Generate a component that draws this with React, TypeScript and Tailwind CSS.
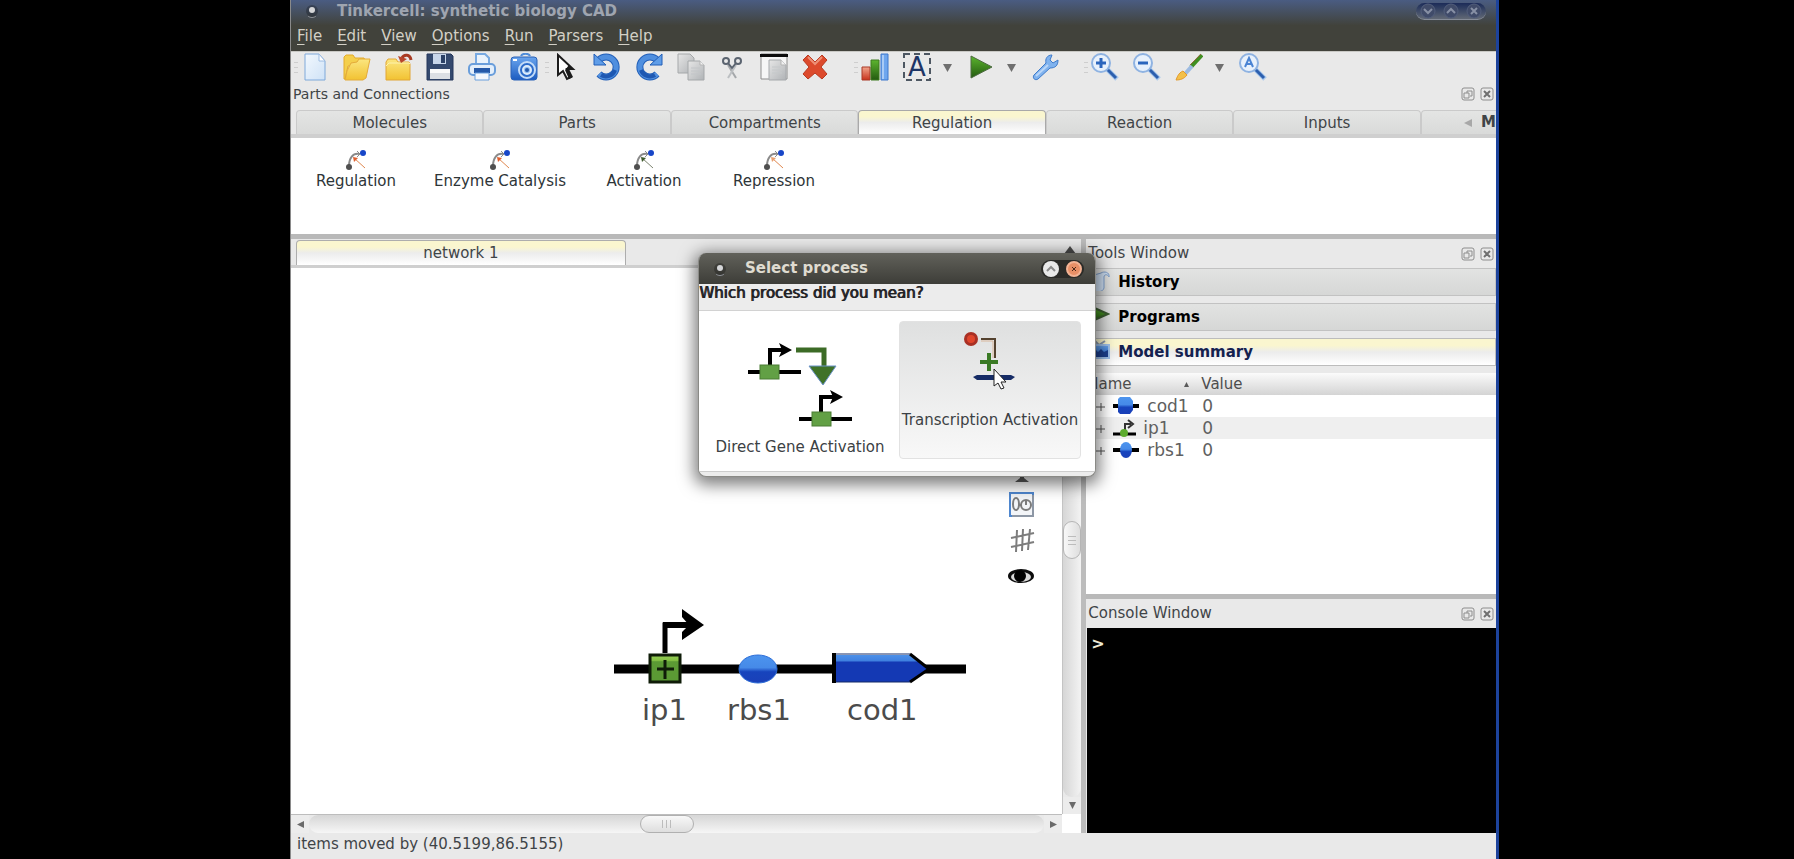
import type { ReactNode } from "react"
import clsx from "clsx"

interface IconProps {
  children: ReactNode
}

// 28px toolbar drawing
function Icon({ children }: IconProps) {
  return (
    <svg viewBox="0 0 28 28" className="size-7 shrink-0" fill="none" aria-hidden="true">
      {children}
    </svg>
  )
}

function Gradients() {
  return (
    <svg width="0" height="0" className="absolute" aria-hidden="true">
      <defs>
        <linearGradient id="blue" x1="0" y1="0" x2="0" y2="1">
          <stop offset="0" stopColor="#6aa5ee" />
          <stop offset="1" stopColor="#1c5cc0" />
        </linearGradient>
        <linearGradient id="paper" x1="0" y1="0" x2="1" y2="1">
          <stop offset="0" stopColor="#f2f8fe" />
          <stop offset="1" stopColor="#cfe2f6" />
        </linearGradient>
        <linearGradient id="yellow" x1="0" y1="0" x2="0" y2="1">
          <stop offset="0" stopColor="#fbe680" />
          <stop offset="1" stopColor="#f2c232" />
        </linearGradient>
        <linearGradient id="grey" x1="0" y1="0" x2="1" y2="1">
          <stop offset="0" stopColor="#e6e6e6" />
          <stop offset="1" stopColor="#b0b3b6" />
        </linearGradient>
        <linearGradient id="green" x1="0" y1="0" x2="0" y2="1">
          <stop offset="0" stopColor="#5cb52f" />
          <stop offset="1" stopColor="#245a10" />
        </linearGradient>
        <linearGradient id="red" x1="0" y1="0" x2="0" y2="1">
          <stop offset="0" stopColor="#f0a58c" />
          <stop offset="1" stopColor="#c8321c" />
        </linearGradient>
        <linearGradient id="cds" x1="0" y1="0" x2="0" y2="1">
          <stop offset="0" stopColor="#4c90e8" />
          <stop offset="0.22" stopColor="#3f80e0" />
          <stop offset="0.26" stopColor="#1439b4" />
          <stop offset="1" stopColor="#1439b4" />
        </linearGradient>
        <linearGradient id="rbs" x1="0" y1="0" x2="0" y2="1">
          <stop offset="0" stopColor="#4c94ee" />
          <stop offset="0.45" stopColor="#468ae8" />
          <stop offset="0.6" stopColor="#1744bd" />
          <stop offset="1" stopColor="#1a40b8" />
        </linearGradient>
        <linearGradient id="box" x1="0" y1="0" x2="0" y2="1">
          <stop offset="0" stopColor="#97cf57" />
          <stop offset="0.2" stopColor="#84c044" />
          <stop offset="0.25" stopColor="#5b9a34" />
          <stop offset="1" stopColor="#5b9a34" />
        </linearGradient>
      </defs>
    </svg>
  )
}

const NewIcon = () => (
  <Icon>
    <path d="M4 1h14l6 7v19H4z" fill="url(#paper)" stroke="#7fa9da" />
    <path d="M18 1v7h6z" fill="#fff" stroke="#9cbce2" />
  </Icon>
)

const OpenIcon = () => (
  <Icon>
    <path d="M1 4l2-2h7l2 3h9l1 2v6H5L2 26H1z" fill="#f4cf4c" stroke="#e2ab2a" />
    <path d="M8 10l6-1 2-3h11l-4 19-3 2H2l2-9z" fill="url(#yellow)" stroke="#e4ab3a" />
  </Icon>
)

const RevertIcon = () => (
  <Icon>
    <path d="M1 9l2-3h8l2 3h11l1 2v16H1z" fill="url(#yellow)" stroke="#e2a634" />
    <path d="M1 13l3-3h20l1 1" stroke="#fdf2ae" />
    <path d="M26 7c-1-6-7-6-9-2" stroke="#a83a22" strokeWidth="3" />
    <path d="M13 3l3 7 6-4z" fill="#b8452b" />
  </Icon>
)

const SaveIcon = () => (
  <Icon>
    <path d="M1 1h24l2 2v24H1z" fill="#34496e" stroke="#24365a" />
    <path d="M7 1h13v10H7z" fill="#c8d6ea" />
    <path d="M15 2h4v8h-4z" fill="#2c4166" />
    <path d="M4 16h20v10H4z" fill="#dcdfe4" />
    <path d="M4 16h20v4H4z" fill="#fafafa" />
  </Icon>
)

const PrintIcon = () => (
  <Icon>
    <path d="M8 12V1h9l4 4v7" fill="#eaf3fc" stroke="#78aae2" strokeWidth="2" />
    <rect x="1" y="11" width="26" height="11" rx="4" fill="#e3eefa" stroke="#6a9edb" strokeWidth="2" />
    <path d="M6 15h16v5H6z" fill="#2559a8" />
    <path d="M7 20h14v7H7z" fill="#f4f8fd" stroke="#6aa0dd" />
  </Icon>
)

const CameraIcon = () => (
  <Icon>
    <path d="M11 3c1-3 8-3 9 0" stroke="#4f8cd8" strokeWidth="2" />
    <rect x="1" y="4" width="26" height="23" rx="3" fill="url(#blue)" stroke="#2a62b8" />
    <path d="M3 7h4" stroke="#fff" strokeWidth="2" />
    <circle cx="17" cy="17" r="8" fill="#2c6ccb" stroke="#c4dcf8" strokeWidth="2" />
    <circle cx="17" cy="17" r="4" fill="#8fbdf2" stroke="#dcebfb" strokeWidth="2" />
    <circle cx="17" cy="17" r="2" fill="#2459ab" />
  </Icon>
)

const PointerIcon = () => (
  <Icon>
    <path d="M6 2v20l5-4 4 8 4-2-4-8h6z" fill="#fff" stroke="#1c1c1c" strokeWidth="2" />
    <path d="M13 17l4 9 4-2-4-8h4l-4-4z" fill="#1c1c1c" />
  </Icon>
)

const UndoIcon = () => (
  <Icon>
    <path d="M6 21a10 10 0 1 0 0-14" stroke="#225fb8" strokeWidth="7" />
    <path d="M6 21a10 10 0 1 0 0-14" stroke="#4f8fdf" strokeWidth="5" />
    <path d="M1 1v11h12z" fill="#5f9de8" stroke="#225fb8" />
    <path d="M8 22c5 3 12 1 14-5" stroke="#1e58b2" strokeWidth="4" />
  </Icon>
)

const RedoIcon = () => (
  <Icon>
    <path d="M22 21a10 10 0 1 1 0-14" stroke="#225fb8" strokeWidth="7" />
    <path d="M22 21a10 10 0 1 1 0-14" stroke="#4f8fdf" strokeWidth="5" />
    <path d="M27 1v11H15z" fill="#5f9de8" stroke="#225fb8" />
    <path d="M20 22c-5 3-12 1-14-5" stroke="#1e58b2" strokeWidth="4" />
  </Icon>
)

const CopyIcon = () => (
  <Icon>
    <path d="M1 1h12l4 4v15H1z" fill="url(#grey)" stroke="#a5a8aa" />
    <path d="M11 8h12l4 4v15H11z" fill="url(#grey)" stroke="#a5a8aa" />
    <path d="M23 8v4h4" fill="#f2f2f2" stroke="#b5b5b5" />
    <path d="M14 15h9M14 18h10M14 21h10" stroke="#c2c5c8" />
  </Icon>
)

const CutIcon = () => (
  <Icon>
    <path d="M10 12l8 13" stroke="#a4a7aa" strokeWidth="2" />
    <path d="M18 12l-8 13" stroke="#bcbfc2" strokeWidth="2" />
    <circle cx="8" cy="8" r="3" stroke="#5b6470" strokeWidth="2" />
    <circle cx="20" cy="8" r="3" stroke="#5b6470" strokeWidth="2" />
    <path d="M10 10l4 5 4-5" stroke="#5b6470" strokeWidth="2" />
  </Icon>
)

const PasteIcon = () => (
  <Icon>
    <path d="M1 1h26v25H1z" fill="#f6f6f6" stroke="#8d8d8d" />
    <path d="M0 1h28v3H0z" fill="#0d0d0d" />
    <path d="M9 7h12l5 5v15H9z" fill="url(#grey)" stroke="#a6a9ac" />
    <path d="M21 7v5h5" fill="#f0f0f0" stroke="#b5b5b5" />
    <path d="M12 14h9M12 17h10M12 20h10" stroke="#c5c8ca" />
  </Icon>
)

const DeleteIcon = () => (
  <Icon>
    <path
      d="M7 2l7 7 7-7 5 5-6 7 6 7-5 5-7-6-7 6-5-5 6-7-6-7z"
      fill="#dc4a2c"
      stroke="#b93a20"
      strokeLinejoin="round"
    />
    <path d="M7 4l7 7 7-7" stroke="#ee9076" strokeWidth="2" />
  </Icon>
)

const ChartIcon = () => (
  <Icon>
    <path d="M1 14h8v13H1z" fill="url(#red)" stroke="#a93826" />
    <path d="M10 7h8v20h-8z" fill="url(#green)" stroke="#3c7a1e" />
    <path d="M20 1h7v26h-7z" fill="#6ea6ee" stroke="#3f78cc" />
    <path d="M22 2v24" stroke="#a9cbf6" strokeWidth="2" />
  </Icon>
)

const TextIcon = () => (
  <Icon>
    <rect x="1" y="1" width="26" height="26" stroke="#4d5762" strokeWidth="2" strokeDasharray="6 4" />
    <text x="14" y="23" textAnchor="middle" fontSize="26" fill="#1d3566" fontFamily="DejaVu Sans, sans-serif">
      A
    </text>
  </Icon>
)

const RunIcon = () => (
  <Icon>
    <path d="M4 3l21 11L4 25z" fill="url(#green)" stroke="#4c6a40" strokeLinejoin="round" />
  </Icon>
)

const WrenchIcon = () => (
  <Icon>
    <path
      d="M3 22l12-12c-1-4 1-8 6-8l-2 5 3 3 5-3c0 6-3 8-8 8L7 26c-3 2-6-1-4-4z"
      fill="#7fb2ee"
      stroke="#3e7bcb"
    />
    <path d="M5 23l12-11" stroke="#b9d6f8" strokeWidth="2" />
  </Icon>
)

function ZoomIcon({ children }: IconProps) {
  return (
    <Icon>
      <path d="M16 16l10 10" stroke="#a9c8ec" strokeWidth="5" />
      <path d="M16 16l9 9" stroke="#2c5fae" strokeWidth="3" />
      <circle cx="10" cy="10" r="9" fill="#e8f1fc" stroke="#8fb3e2" strokeWidth="2" />
      {children}
    </Icon>
  )
}

const BrushIcon = () => (
  <Icon>
    <path d="M27 2L16 14" stroke="#3f8f22" strokeWidth="4" />
    <path d="M26 1L15 12" stroke="#8b6a3a" />
    <path d="M17 13l-7 8" stroke="#9dbbe2" strokeWidth="4" />
    <path d="M8 18l4 4c-3 4-7 5-11 5 1-2 2-7 7-9z" fill="#f3c04a" stroke="#e39a2c" />
  </Icon>
)

function ToolButton({ label, grow, children }: { label: string; grow?: boolean; children: ReactNode }) {
  return (
    <button type="button" aria-label={label} className={clsx("flex justify-center", grow ? "flex-1" : "w-[42px]")}>
      {children}
    </button>
  )
}

function DropArrow({ label }: { label: string }) {
  return (
    <button type="button" aria-label={label} className="mr-1 flex w-[18px] justify-center">
      <svg viewBox="0 0 10 10" className="size-[9px]">
        <path d="M0 1h10L5 10z" fill="#6f6f6f" />
      </svg>
    </button>
  )
}

// dotted handle at the start of a toolbar group
function Grip() {
  return (
    <div className="-mr-1 flex w-1 flex-col gap-1">
      <span className="h-px bg-[#cecece]" />
      <span className="h-px bg-[#cecece]" />
      <span className="h-px bg-[#cecece]" />
    </div>
  )
}

function Toolbar() {
  return (
    <div className="flex h-[31px] items-center border-t border-[#c9c9c5] pl-[3px]">
      <div className="flex w-[251px] items-center">
        <Grip />
        <ToolButton label="New" grow><NewIcon /></ToolButton>
        <ToolButton label="Open" grow><OpenIcon /></ToolButton>
        <ToolButton label="Revert" grow><RevertIcon /></ToolButton>
        <ToolButton label="Save" grow><SaveIcon /></ToolButton>
        <ToolButton label="Print" grow><PrintIcon /></ToolButton>
        <ToolButton label="Snapshot" grow><CameraIcon /></ToolButton>
      </div>
      <div className="flex w-[291px] items-center">
        <Grip />
        <ToolButton label="Select" grow><PointerIcon /></ToolButton>
        <ToolButton label="Undo" grow><UndoIcon /></ToolButton>
        <ToolButton label="Redo" grow><RedoIcon /></ToolButton>
        <ToolButton label="Copy" grow><CopyIcon /></ToolButton>
        <ToolButton label="Cut" grow><CutIcon /></ToolButton>
        <ToolButton label="Paste" grow><PasteIcon /></ToolButton>
        <ToolButton label="Delete" grow><DeleteIcon /></ToolButton>
      </div>
      <div className="ml-[18px] flex items-center">
        <Grip />
        <ToolButton label="Plot"><ChartIcon /></ToolButton>
        <ToolButton label="Text"><TextIcon /></ToolButton>
        <DropArrow label="Text options" />
        <ToolButton label="Run"><RunIcon /></ToolButton>
        <DropArrow label="Run options" />
        <ToolButton label="Settings"><WrenchIcon /></ToolButton>
      </div>
      <div className="ml-[18px] flex items-center">
        <Grip />
        <ToolButton label="Zoom in">
          <ZoomIcon><path d="M5 10h10M10 5v10" stroke="#2c66bd" strokeWidth="3" /></ZoomIcon>
        </ToolButton>
        <ToolButton label="Zoom out">
          <ZoomIcon><path d="M5 10h10" stroke="#2c66bd" strokeWidth="3" /></ZoomIcon>
        </ToolButton>
        <ToolButton label="Brush"><BrushIcon /></ToolButton>
        <DropArrow label="Brush options" />
        <ToolButton label="Find">
          <ZoomIcon><path d="M6 14l4-9 4 9M7 11h6" stroke="#4a84d4" strokeWidth="2" /></ZoomIcon>
        </ToolButton>
      </div>
    </div>
  )
}

function DockTitle({ title, className }: { title: string; className: string }) {
  return (
    <div className={clsx("flex items-center justify-between pr-[2px] pl-[2px] text-[#3f4447]", className)}>
      <h2>{title}</h2>
      <div className="flex gap-[5px]">
        <button type="button" aria-label={`Float ${title}`}>
          <svg viewBox="0 0 14 14" className="size-[14px]" fill="none" stroke="#8d8d8d">
            <rect x="1" y="1" width="12" height="12" rx="2" />
            <path d="M6 6V4h5v5H9M3 6h5v5H3z" />
          </svg>
        </button>
        <button type="button" aria-label={`Close ${title}`}>
          <svg viewBox="0 0 14 14" className="size-[14px]" fill="none" stroke="#8d8d8d">
            <rect x="1" y="1" width="12" height="12" rx="2" />
            <path d="M4 4l6 6M10 4l-6 6" stroke="#6f6f6f" strokeWidth="2" />
          </svg>
        </button>
      </div>
    </div>
  )
}

const menus = ["File", "Edit", "View", "Options", "Run", "Parsers", "Help"]

const tabs = ["Molecules", "Parts", "Compartments", "Regulation", "Reaction", "Inputs"]

const parts = [
  { name: "Regulation", color: "#e08850", dot: "#e06030", width: "w-[122px]" },
  { name: "Enzyme Catalysis", color: "#e08850", dot: "#e06030", width: "w-[166px]" },
  { name: "Activation", color: "#7d8470", dot: "#3f5a2c", width: "w-[122px]" },
  { name: "Repression", color: "#e08850", dot: "#e8a070", width: "w-[138px]" },
]

function PartsDock() {
  return (
    <section>
      <DockTitle title="Parts and Connections" className="mb-1 h-6 text-[14px]" />
      <div role="tablist" className="flex h-6 pl-[5px] text-[15px] text-[#3f4447]">
        {tabs.map((tab) => (
          <button
            key={tab}
            type="button"
            role="tab"
            aria-selected={tab === "Regulation"}
            className={clsx(
              "flex-[5] rounded-t border border-b-0 leading-[22px]",
              tab === "Regulation"
                ? "border-[#a9a9a9] bg-linear-to-b from-[#faf6cf] from-25% via-[#ececec] via-50% to-white"
                : "border-[#cacaca] bg-linear-to-b from-[#e4e5e4] to-[#d9dad9]"
            )}
          >
            {tab}
          </button>
        ))}
        <button
          type="button"
          role="tab"
          aria-selected={false}
          className="flex flex-[2] items-center justify-end gap-[9px] overflow-hidden rounded-tl border border-r-0 border-b-0 border-[#cacaca] bg-linear-to-b from-[#e4e5e4] to-[#d9dad9] font-bold"
        >
          <svg viewBox="0 0 8 8" className="size-2">
            <path d="M8 0v8L0 4z" fill="#a8a8a8" />
          </svg>
          M
        </button>
      </div>
      <div className="h-1 bg-[#cfcfcf]" />
      <div className="flex h-24 bg-white pt-3 pl-1">
        {parts.map((part) => (
          <button
            key={part.name}
            type="button"
            className={clsx("flex flex-col items-center text-[15px] leading-5 text-[#2e3538]", part.width)}
          >
            <svg viewBox="0 0 20 20" className="size-5" fill="none">
              <path d="M3 16C3 8 7 3 13 4" stroke="#8a8a8a" strokeWidth="2" />
              <path d="M11 1l3 3-3 3" stroke="#8a8a8a" />
              <path d="M8 8l11 10" stroke={part.color} />
              <path d="M7 7l5 1-4 4z" fill={part.dot} />
              <circle cx="3" cy="17" r="3" fill="#4f4f4f" />
              <circle cx="17" cy="3" r="3" fill="#1746c8" />
            </svg>
            <span className="mt-px whitespace-nowrap">{part.name}</span>
          </button>
        ))}
      </div>
    </section>
  )
}

function Network() {
  return (
    <svg viewBox="0 0 352 120" className="absolute top-[340px] left-[323px] h-[120px] w-[352px]">
      <path d="M0 61h352" stroke="#000" strokeWidth="9" />
      <path d="M51 45V17h30" stroke="#000" strokeWidth="5" fill="none" />
      <path d="M68 1l22 16-22 15v-8l7-7-7-8z" fill="#000" />
      <path d="M49 14h28v6H49z" fill="#000" />
      <rect x="36" y="47" width="30" height="27" fill="url(#box)" stroke="#0f1c08" strokeWidth="3" />
      <path d="M43 61h17M51 52v19" stroke="#0f1c08" strokeWidth="3" />
      <ellipse cx="144" cy="61" rx="19" ry="14" fill="url(#rbs)" stroke="#2f6fd8" />
      <path d="M219 47h77l18 14-18 13h-77z" fill="url(#cds)" />
      <path d="M219 46h77M219 74h77" stroke="#142a66" />
      <path d="M296 46l19 15-19 13" stroke="#000" strokeWidth="3" fill="none" />
      <path d="M220 45v30" stroke="#000" strokeWidth="4" />
      <g fontSize="29" fill="#4b4b4b" fontFamily="DejaVu Sans, sans-serif">
        <text x="28" y="112">ip1</text>
        <text x="113" y="112">rbs1</text>
        <text x="233" y="112">cod1</text>
      </g>
    </svg>
  )
}

// small tools floating over the right side of the canvas
function CanvasTools() {
  return (
    <div className="absolute top-[186px] right-[26px] flex flex-col gap-2">
      <button type="button" aria-label="Display">
        <Icon>
          <path d="M2 2h24v18H2z" fill="#8a8a8a" />
          <path d="M12 18h4v6l5 4H7l5-4z" fill="#5b5b5b" />
        </Icon>
      </button>
      <button type="button" aria-label="Overview">
        <Icon>
          <rect x="2" y="3" width="23" height="23" fill="#f3f5f8" stroke="#4f87cf" strokeWidth="2" />
          <path d="M25 5v21H4" stroke="#8d97a5" strokeWidth="2" />
          <ellipse cx="8" cy="14" rx="3" ry="6" stroke="#7c7c7c" strokeWidth="2" />
          <circle cx="18" cy="15" r="5" stroke="#7c7c7c" strokeWidth="2" />
          <path d="M11 15h2M18 11v4" stroke="#7c7c7c" strokeWidth="2" />
        </Icon>
      </button>
      <button type="button" aria-label="Grid">
        <Icon>
          <path d="M3 12l23-5M3 21l23-5M9 4L8 26M15 3l-1 22M22 3l-2 21" stroke="#7d7d7d" strokeWidth="2" />
        </Icon>
      </button>
      <button type="button" aria-label="Visibility">
        <Icon>
          <ellipse cx="13" cy="14" rx="13" ry="7" fill="#0c0c0c" />
          <ellipse cx="13" cy="15" rx="10" ry="5" fill="#d9d9d9" />
          <circle cx="12" cy="14" r="6" fill="#000" />
        </Icon>
      </button>
    </div>
  )
}

function Arrow({ d, label, className }: { d: string; label: string; className: string }) {
  return (
    <button type="button" aria-label={label} className={clsx("flex items-center justify-center bg-[#ececec]", className)}>
      <svg viewBox="0 0 8 8" className="size-[7px]">
        <path d={d} fill="#6a6a6a" />
      </svg>
    </button>
  )
}

function NetworkView() {
  return (
    <section className="flex min-w-0 flex-1 flex-col">
      <div className="flex h-[29px] justify-between border-b-3 border-[#cfcfcf] pt-px pl-[5px]">
        <button
          type="button"
          role="tab"
          aria-selected
          className="w-[42%] rounded-t border border-b-0 border-[#adadad] bg-linear-to-b from-[#faf6cf] from-25% via-[#ececec] via-50% to-white text-[15px] leading-[22px] text-[#3f4447]"
        >
          network 1
        </button>
        <svg viewBox="0 0 12 12" className="mt-1 mr-[5px] size-3">
          <path d="M6 2l6 8H0z" fill="#4b4b4b" />
        </svg>
      </div>
      <div className="flex flex-1">
        <div className="relative flex-1 overflow-hidden bg-white">
          <Network />
          <CanvasTools />
        </div>
        <div className="flex w-[19px] flex-col border-l border-[#c4c4c4]">
          <Arrow d="M4 1l4 6H0z" label="Scroll up" className="h-[18px]" />
          <div className="relative flex-1 rounded-full bg-linear-to-r from-[#d6d6d6] to-[#f3f3f3]">
            <div className="absolute top-[46%] flex h-[38px] w-full flex-col items-center justify-center gap-[3px] rounded-full border border-[#b5b5b5] bg-linear-to-r from-[#f8f8f8] to-[#dedede]">
              <span className="h-px w-2 bg-[#bcbcbc]" />
              <span className="h-px w-2 bg-[#bcbcbc]" />
              <span className="h-px w-2 bg-[#bcbcbc]" />
            </div>
          </div>
          <Arrow d="M0 0h8L4 8z" label="Scroll down" className="h-[17px]" />
        </div>
      </div>
      <div className="flex h-[19px]">
        <div className="flex flex-1 border-t border-[#bdbdbd]">
          <Arrow d="M8 0v8L0 4z" label="Scroll left" className="w-[18px]" />
          <div className="relative flex-1 rounded-full bg-linear-to-b from-[#d6d6d6] to-[#f6f6f6]">
            <div className="absolute left-[45%] flex h-full w-[54px] items-center justify-center gap-[3px] rounded-full border border-[#b0b0b0] bg-linear-to-b from-[#f8f8f8] to-[#dedede]">
              <span className="h-2 w-px bg-[#bcbcbc]" />
              <span className="h-2 w-px bg-[#bcbcbc]" />
              <span className="h-2 w-px bg-[#bcbcbc]" />
            </div>
          </div>
          <Arrow d="M0 0l8 4-8 4z" label="Scroll right" className="w-[18px]" />
        </div>
        <div className="w-[19px] bg-white" />
      </div>
    </section>
  )
}

const sections = [
  {
    name: "History",
    icon: <path d="M2 6c3 3 4 9 2 14 4 3 10 2 11-2V7c0-3 4-3 5 0 1-5-5-6-8-4z" fill="#cfe0f4" stroke="#7f9fcb" />,
  },
  {
    name: "Programs",
    icon: <path d="M1 1l18 8L1 17z" fill="url(#green)" stroke="#3c5c30" strokeWidth="2" />,
  },
  {
    name: "Model summary",
    icon: (
      <>
        <path d="M6 1l4 4 6-4" stroke="#8a98ad" strokeWidth="2" />
        <path d="M1 5h19v13H1z" fill="url(#blue)" stroke="#9dbfe9" strokeWidth="2" />
        <path d="M2 17v-5l4-3 3 3 3-3 3 3 4-2v7z" fill="#1c3f8e" />
      </>
    ),
  },
]

const rows = [
  {
    name: "cod1",
    value: 0,
    icon: (
      <>
        <path d="M0 9h26" stroke="#000" strokeWidth="4" />
        <path d="M5 2l2-2h10l3 4v9l-3 4H7l-2-2z" fill="url(#rbs)" />
      </>
    ),
  },
  {
    name: "ip1",
    value: 0,
    icon: (
      <>
        <path d="M0 15h23" stroke="#000" strokeWidth="3" />
        <path d="M12 13V5h6" stroke="#333" strokeWidth="2" />
        <path d="M15 1l5 4-5 4" stroke="#333" strokeWidth="2" />
        <circle cx="11" cy="14" r="4" fill="#5cab2e" />
      </>
    ),
  },
  {
    name: "rbs1",
    value: 0,
    icon: (
      <>
        <path d="M0 9h26" stroke="#000" strokeWidth="4" />
        <ellipse cx="13" cy="9" rx="6" ry="8" fill="url(#rbs)" />
      </>
    ),
  },
]

function ToolsDock() {
  return (
    <section className="flex flex-1 flex-col">
      <DockTitle title="Tools Window" className="h-[29px] text-[15px]" />
      <div className="flex flex-col gap-[7px] pb-[7px]">
        {sections.map((s) => (
          <button
            key={s.name}
            type="button"
            className={clsx(
              "flex h-7 items-center gap-2 border pl-[2px] text-[15px] font-bold",
              s.name === "Model summary"
                ? "border-[#bcbcbc] bg-linear-to-b from-[#faf6cf] from-25% via-[#ececec] via-50% to-white text-[#14214f]"
                : "border-[#c2c2c2] bg-linear-to-b from-[#e2e3e2] to-[#d6d7d6] text-black"
            )}
          >
            <svg viewBox="0 0 21 21" className="-mt-1 size-[21px]" fill="none">
              {s.icon}
            </svg>
            {s.name}
          </button>
        ))}
      </div>
      <div className="flex-1 bg-white">
        <table className="w-full table-fixed border-collapse text-left text-[#606060]">
          <thead>
            <tr className="h-[22px] bg-linear-to-b from-[#fbfbfb] to-[#d4d4d4] text-[15px] leading-[22px] text-[#4d4d4d]">
              <th scope="col" className="w-[115px] p-0 pl-px font-normal">
                <span className="flex items-center justify-between pr-3">
                  Name
                  <svg viewBox="0 0 6 6" className="size-[5px]">
                    <path d="M3 0l3 6H0z" fill="#5a5a5a" />
                  </svg>
                </span>
              </th>
              <th scope="col" className="p-0 font-normal">Value</th>
            </tr>
          </thead>
          <tbody className="text-[17px] leading-[22px]">
            {rows.map((row) => (
              <tr key={row.name} className="h-[22px] even:bg-[#efefef]">
                <td className="p-0 pl-[10px]">
                  <span className="flex items-center">
                    <svg viewBox="0 0 9 9" className="size-[9px]">
                      <path d="M0 5h9M5 1v8" stroke="#555" />
                    </svg>
                    <svg
                      viewBox="0 0 26 18"
                      className={clsx("ml-2 h-[18px] w-[26px]", row.name === "ip1" ? "mr-1" : "mr-2")}
                      fill="none"
                    >
                      {row.icon}
                    </svg>
                    {row.name}
                  </span>
                </td>
                <td className="p-0 pl-px">{row.value}</td>
              </tr>
            ))}
          </tbody>
        </table>
      </div>
    </section>
  )
}

function ConsoleDock() {
  return (
    <section className="flex flex-col">
      <DockTitle title="Console Window" className="h-[29px] text-[15px]" />
      <textarea
        aria-label="Console"
        defaultValue=">"
        className="ml-px h-[205px] resize-none bg-black px-1 py-[6px] text-[16px] leading-5 font-bold text-[#eeead6] outline-none"
      />
    </section>
  )
}

function AppGlyph() {
  return (
    <svg viewBox="0 0 16 16" className="size-4" aria-hidden="true">
      <circle cx="8" cy="8" r="6" fill="#000" fillOpacity="0.25" />
      <circle cx="8" cy="7" r="3" fill="#d5d6d8" />
      <path d="M4 13c2 2 6 2 8 0" stroke="#8b8e94" fill="none" />
    </svg>
  )
}

function TitleBar() {
  return (
    <header className="bg-linear-to-b from-[#4a5c82] to-[#41423b] to-50%">
      <div className="flex h-[22px] items-center pr-[10px] pl-[13px]">
        <AppGlyph />
        <h1 className="ml-[17px] text-[15px] leading-5 font-bold text-[#9fa5b0]">Tinkercell: synthetic biology CAD</h1>
        <div className="ml-auto flex gap-[7px] rounded-full border-b border-[#868c98] bg-linear-to-b from-[#1c2b58] to-[#626975] px-1">
          {["M4 6l4 4 4-4", "M4 10l4-4 4 4", "M5 5l6 6M11 5l-6 6"].map((d, i) => (
            <button key={d} type="button" aria-label={["Minimize", "Maximize", "Close"][i]}>
              <svg viewBox="0 0 16 16" className="size-4" fill="none">
                <circle cx="8" cy="8" r="7" fill="#404b69" stroke="#525e7c" />
                <path d={d} stroke="#8790a5" strokeWidth="2" />
              </svg>
            </button>
          ))}
        </div>
      </div>
      <nav className="flex h-[29px] items-center gap-[15px] pl-[6px] text-[15px] text-[#d3d0c6]">
        {menus.map((menu) => (
          <button key={menu} type="button">
            <span className="underline underline-offset-3">{menu[0]}</span>
            {menu.slice(1)}
          </button>
        ))}
      </nav>
    </header>
  )
}

function PromoterArt() {
  return (
    <svg viewBox="0 0 104 84" className="h-[84px] w-[104px]" fill="none">
      <path d="M0 29h53M51 76h53" stroke="#000" strokeWidth="4" />
      <path d="M22 24V7h14M73 70V54h14" stroke="#000" strokeWidth="4" />
      <path d="M31 0l13 7-13 7 3-7zM82 47l13 7-13 7 3-7z" fill="#000" />
      <rect x="12" y="22" width="19" height="14" fill="#62a045" stroke="#4b7d34" />
      <rect x="64" y="69" width="19" height="14" fill="#62a045" stroke="#4b7d34" />
      <path d="M48 7h28v17" stroke="#3c6b26" strokeWidth="5" />
      <path d="M61 23h27L75 42z" fill="#3f7228" stroke="#6b92c8" />
    </svg>
  )
}

function TranscriptionArt() {
  return (
    <svg viewBox="0 0 52 48" className="h-12 w-[52px]" fill="none">
      <path d="M17 7h14v19" stroke="#54422f" strokeWidth="2" />
      <path d="M17 9h12v17" stroke="#d9b79c" />
      <circle cx="7" cy="7" r="7" fill="#a93024" />
      <circle cx="7" cy="7" r="4" fill="#e0452c" />
      <path d="M9 45l4-2h34l4 2-4 3H13z" fill="#162c66" />
      <path d="M16 30h18M25 21v18" stroke="#3a7a24" strokeWidth="4" />
    </svg>
  )
}

function SelectProcess() {
  return (
    <div
      role="dialog"
      aria-labelledby="dialog-title"
      className="absolute top-[253px] left-[407px] w-[398px] overflow-hidden rounded-lg border border-t-0 border-[#8a8a86] bg-[#ececec] shadow-[0_4px_16px_4px_rgba(0,0,0,0.5)]"
    >
      <div className="flex h-[31px] items-center bg-linear-to-b from-[#62625b] to-[#3d3d38] pr-[11px] pl-[13px]">
        <AppGlyph />
        <h2 id="dialog-title" className="ml-[17px] text-[15px] font-bold text-[#dfdbd0]">
          Select process
        </h2>
        <div className="ml-auto flex gap-[7px] rounded-full bg-[#2b2b28] px-[2px] py-px">
          <button type="button" aria-label="Roll up">
            <svg viewBox="0 0 16 16" className="size-4" fill="none">
              <circle cx="8" cy="8" r="8" fill="#e9e9e9" />
              <path d="M4 10l4-4 4 4" stroke="#8b8b8b" strokeWidth="2" />
            </svg>
          </button>
          <button type="button" aria-label="Cancel">
            <svg viewBox="0 0 16 16" className="size-4" fill="none">
              <circle cx="8" cy="8" r="7" fill="#e88f66" stroke="#f3b394" strokeWidth="2" />
              <path d="M6 6l4 4M10 6l-4 4" stroke="#4d2a1a" />
            </svg>
          </button>
        </div>
      </div>
      <p className="h-[27px] border-b border-[#d2d2d2] text-[15px] leading-[19px] text-[#1f2124] [text-shadow:1px_0_0_#1f2124]">
        Which process did you mean?
      </p>
      <div className="grid grid-cols-2 gap-2 bg-white pt-[10px] pr-[14px] pb-3 pl-[10px]">
        <button type="button" className="flex h-[138px] flex-col items-center pt-[22px] text-[15px] text-[#3c4144]">
          <PromoterArt />
          <span className="mt-[9px] whitespace-nowrap">Direct Gene Activation</span>
        </button>
        <button
          type="button"
          className="relative flex h-[138px] flex-col items-center rounded border border-[#e2e2e2] bg-linear-to-b from-[#dfe0e0] to-[#f8f8f8] pt-[10px] text-[15px] text-[#3c4144]"
        >
          <TranscriptionArt />
          <span className="mt-[29px] whitespace-nowrap">Transcription Activation</span>
          <svg viewBox="0 0 14 22" className="absolute top-[46px] left-[93px] h-[22px] w-[14px]">
            <path d="M1 1v17l4-3 3 6 3-1-3-6h5z" fill="#fff" stroke="#222" />
          </svg>
        </button>
      </div>
      <div className="h-[5px] border-t border-[#cdcdcd]" />
    </div>
  )
}

export default function App() {
  return (
    <div className="flex min-h-screen justify-center bg-black pr-[5px] font-['DejaVu_Sans',sans-serif]">
      <Gradients />
      <div className="relative flex w-full max-w-[1209px] flex-col border-r-3 border-l border-r-[#1d439c] border-l-[#8a8a8a] bg-[#e9e9e9]">
        <TitleBar />
        <Toolbar />
        <PartsDock />
        <div className="h-[5px] bg-[#b9b9b9]" />
        <main className="flex flex-1">
          <NetworkView />
          <div className="w-[5px] bg-[#bcbcbc]" />
          <aside className="flex w-[34%] flex-col">
            <ToolsDock />
            <div className="h-[5px] bg-[#b9b9b9]" />
            <ConsoleDock />
          </aside>
        </main>
        <footer className="h-[26px] pl-[6px] text-[15px] leading-[22px] text-[#3f4447]">
          items moved by (40.5199,86.5155)
        </footer>
        <SelectProcess />
      </div>
    </div>
  )
}
